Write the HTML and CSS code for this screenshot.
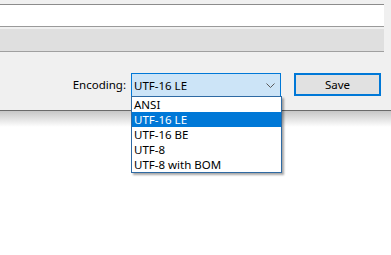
FILE: index.html
```html
<!DOCTYPE html>
<html lang="en">
<head>
	<meta charset="UTF-8">
	<title>Save</title>
	<link rel="stylesheet" href="styles.css">
</head>
<body>
	<div id="window">
		<div class="top-strip"></div>
		<div class="editor"></div>
		<div class="band"></div>
		<div class="dialog">
			<span class="label">Encoding:</span>
			<div class="combo-wrap">
				<div class="combo">
					<span>UTF-16 LE</span>
					<svg class="arrow" width="9" height="5" viewBox="0 0 9 5"><path d="M0.5 0.5 L4.5 4.5 L8.5 0.5" fill="none" stroke="#5a5a5a" stroke-width="1"/></svg>
				</div>
				<ul class="list">
					<li>ANSI</li>
					<li class="select">UTF-16 LE</li>
					<li>UTF-16 BE</li>
					<li>UTF-8</li>
					<li>UTF-8 with BOM</li>
				</ul>
			</div>
			<button class="save">Save</button>
		</div>
	</div>
	<div class="shadow"></div>
</body>
</html>
```
FILE: styles.css
```css
*{
	margin:0;
	padding:0;
	box-sizing:border-box;
}
ul{
	list-style:none;
}
html,body{
	height:100%;
}
body{
	background:#fff;
	font-family:"Noto Sans","Open Sans",sans-serif;
	font-size:11.5px;
	color:#000;
}
#window{
	background:#f0f0f0;
	border-bottom:1px solid #6a6a6a;
}
.top-strip{
	height:4px;
}
.editor{
	height:23px;
	margin-right:7px;
	background:#fff;
	border-top:1px solid #8c8c8c;
	border-bottom:1px solid #9a9a9a;
}
.band{
	height:23px;
	margin-top:2px;
	margin-right:7px;
	background:#dfdfdf;
	border-bottom:1px solid #a0a0a0;
}
.dialog{
	display:flex;
	align-items:flex-start;
	justify-content:flex-end;
	height:58px;
	padding-top:21px;
	padding-right:10px;
}
.label{
	line-height:24px;
	margin-right:5px;
}
.combo-wrap{
	position:relative;
	width:150px;
	margin-right:13px;
}
.combo{
	display:flex;
	align-items:center;
	justify-content:space-between;
	height:24px;
	padding:0 5px 0 2px;
	background:#cce4f7;
	border:1px solid #0078d7;
}
.arrow{
	display:block;
}
.list{
	position:absolute;
	top:23px;
	left:0;
	width:151px;
	background:#fff;
	border:1px solid #2f6aa3;
	box-shadow:2px 2px 2px rgba(0,0,0,.35);
	z-index:1;
}
.list li{
	height:15px;
	line-height:15px;
	padding-left:2px;
}
.list .select{
	background:#0078d7;
	color:#fff;
}
.save{
	width:87px;
	height:23px;
	font:inherit;
	background:#e1e1e1;
	border:2px solid #0078d7;
}
.shadow{
	height:16px;
	background:linear-gradient(#c6c6c6,#fff);
}
```
